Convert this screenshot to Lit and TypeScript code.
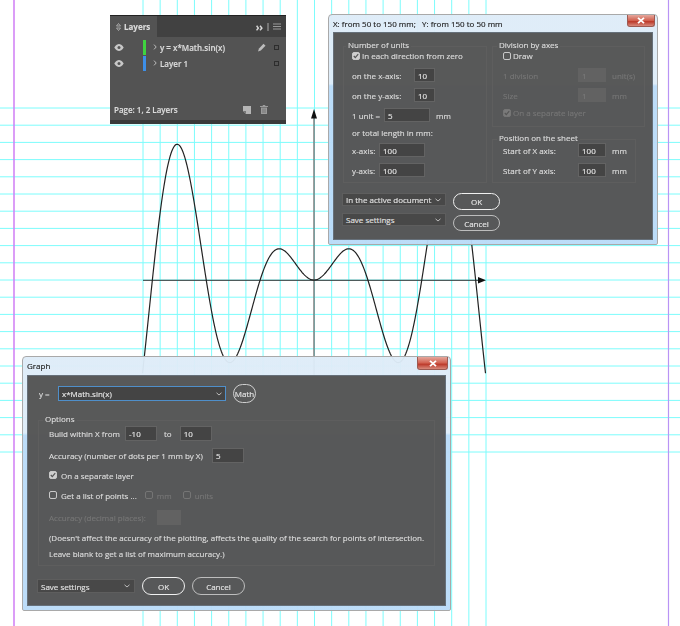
import { LitElement, html, css, svg } from 'lit'
import { customElement } from 'lit/decorators.js'

const UNIT = 17.15
const CX = 314
const CY = 280

@customElement('app-root')
export class AppRoot extends LitElement {
  static styles = css`
    :host {
      display: block;
      position: relative;
      width: 680px;
      height: 626px;
      overflow: hidden;
      background: #fff;
      font-family: "Open Sans", "Liberation Sans", sans-serif;
      font-size: 8px;
      color: #dcdcdc;
      -webkit-text-stroke: .15px;
    }

    * {
      box-sizing: border-box;
    }

    .canvas {
      position: absolute;
      inset: 0;
      width: 680px;
      height: 626px;
    }

    /* windows sit on the page like on a desktop */
    .win {
      position: absolute;
      display: flex;
      flex-direction: column;
      padding: 0 4px 4px;
      border: 1px solid #a9a9a9;
      border-radius: 4px 4px 2px 2px;
      background: linear-gradient(180deg, rgba(222, 236, 248, .96) 0, rgba(222, 236, 248, .96) 30%, rgba(186, 219, 248, .96) 31%, rgba(186, 219, 248, .96) 100%);
      filter: blur(.25px);
    }

    .win--units {
      left: 328px;
      top: 14px;
      width: 330px;
      height: 231px;
    }

    .win--graph {
      left: 22px;
      top: 356px;
      width: 429px;
      height: 255px;
    }

    .title {
      display: flex;
      justify-content: space-between;
      align-items: flex-start;
      height: 17px;
      margin-right: -2px;
      color: #222;
    }

    .win--graph .title {
      height: 18px;
    }

    .title span {
      padding-top: 3px;
    }

    .close {
      display: flex;
      justify-content: center;
      align-items: center;
      width: 28px;
      height: 12px;
      border: 1px solid #9c5a52;
      border-top: 0;
      border-radius: 0 0 3px 3px;
      background: linear-gradient(180deg, #e5a79c 0, #d1604f 50%, #bc3a2b 60%, #d88a7c 100%);
    }

    .win--graph .close {
      width: 31px;
      height: 13px;
    }

    .body {
      flex: 1;
      background: rgba(85, 85, 85, .975);
      border: 1px solid #66707a;
    }

    .win--units .body {
      padding: 6px 0 0 9px;
    }

    .win--graph .body {
      padding: 8px 0 0 10px;
    }

    .cols {
      display: flex;
      gap: 5px;
    }

    .stack {
      display: flex;
      flex-direction: column;
      gap: 5px;
    }

    fieldset {
      margin: 0;
      padding: 0 0 0 8px;
      min-width: 0;
      border: 1px solid #5e5e5e;
    }

    legend {
      margin-left: -6px;
      padding: 0 2px 4px;
      line-height: 11px;
    }

    .g-units {
      width: 144px;
      height: 144px;
    }

    .g-div {
      width: 153px;
      height: 88px;
      padding-left: 10px;
    }

    .g-pos {
      width: 144px;
      height: 51px;
      padding-left: 10px;
    }

    .row {
      display: flex;
      align-items: center;
      height: 20px;
      white-space: nowrap;
    }

    .row--check {
      height: 9px;
      margin: -3px 0 5px;
    }

    .row--tight {
      height: 15px;
    }

    .row--first {
      margin-top: -7px;
    }

    .dim {
      color: #767676;
    }

    .l62 { width: 62px; }
    .l32 { width: 32px; }
    .l27 { width: 27px; }
    .l75 { width: 75px; }
    .l108 { width: 108px; }

    .unit {
      margin-left: 6px;
    }

    input {
      display: block;
      height: 14px;
      padding: 0 3px;
      border: 1px solid #636363;
      background: #444;
      color: #e6e6e6;
      font: inherit;
      outline: none;
    }

    input:disabled {
      background: #626262;
      border-color: #626262;
      color: #7a7a7a;
    }

    .w21 { width: 21px; }
    .w28 { width: 28px; }
    .w46 { width: 46px; }
    .w32 { width: 32px; }
    .w24 { width: 24px; }

    .check {
      display: flex;
      justify-content: center;
      align-items: center;
      flex: none;
      width: 8px;
      height: 8px;
      margin-right: 2px;
      border: 1px solid #c9c9c9;
      border-radius: 2px;
    }

    .win--graph .check {
      margin-right: 4px;
    }

    .check--on {
      background: #cfcfcf;
    }

    .dim .check {
      border-color: #757575;
    }

    .dim .check--on {
      background: #7a7a7a;
    }

    .foot {
      display: flex;
      gap: 7px;
      margin: 10px 0 0 -1px;
    }

    .selects {
      display: flex;
      flex-direction: column;
      gap: 7px;
      width: 104px;
    }

    .select {
      display: flex;
      justify-content: space-between;
      align-items: center;
      height: 13px;
      padding: 0 4px 0 3px;
      border: 1px solid #5e5e5e;
      background: #484848;
      color: #e0e0e0;
    }

    .buttons {
      display: flex;
      flex-direction: column;
      gap: 5px;
    }

    button {
      height: 16px;
      padding: 0;
      border: 1px solid #bdbdbd;
      border-radius: 9px;
      background: transparent;
      color: #e4e4e4;
      font: inherit;
    }

    .b47 { width: 47px; }
    .b43 { width: 43px; }
    .b53 { width: 53px; }

    .primary {
      height: 17px;
      border: 1.5px solid #f0f0f0;
    }

    /* graph dialog */
    .y-row {
      display: flex;
      align-items: center;
      height: 19px;
      padding-left: 1px;
    }

    .y-row > span {
      width: 19px;
    }

    .combo {
      display: flex;
      justify-content: space-between;
      align-items: center;
      width: 168px;
      height: 15px;
      padding: 0 3px;
      border: 1px solid #4f8fca;
      background: #444;
      color: #e6e6e6;
    }

    .math {
      width: 23px;
      height: 19px;
      margin-left: 7px;
      border-radius: 10px;
      border: 1.5px solid #cfcfcf;
    }

    .g-options {
      width: 397px;
      height: 153px;
      margin-top: 10px;
      padding-left: 10px;
    }

    .g-options input {
      height: 15px;
    }

    .row--build {
      height: 18px;
      margin: -4px 0 3px;
    }

    .row--dec {
      height: 24px;
    }

    .row--note {
      height: 16px;
    }

    .row--last {
      height: 17px;
    }

    .to {
      margin: 0 8px 0 7px;
    }

    .l76 { width: 76px; }
    .l163 { width: 163px; }

    .opt {
      margin-left: 8px;
    }

    .opt + .opt {
      margin-left: 11px;
    }

    .graph-foot {
      display: flex;
      align-items: center;
      gap: 7px;
      margin: 11px 0 0 -1px;
    }

    .graph-foot .select {
      width: 98px;
      height: 14px;
    }

    .graph-foot button {
      height: 18px;
    }

    /* layers panel */
    .layers {
      position: absolute;
      left: 110px;
      top: 15px;
      width: 176px;
      height: 109px;
      display: flex;
      flex-direction: column;
      background: #535353;
      border-top: 1px solid #222;
      color: #dcdcdc;
      filter: blur(.25px);
    }

    .l-head {
      display: flex;
      align-items: stretch;
      justify-content: space-between;
      height: 21px;
      background: #414141;
    }

    .l-tab {
      display: flex;
      align-items: center;
      gap: 3px;
      width: 47px;
      padding-left: 6px;
      background: #535353;
      font-weight: 700;
    }

    .l-tools {
      display: flex;
      align-items: center;
      gap: 4px;
      padding-right: 5px;
      font-size: 10px;
      font-weight: 700;
    }

    .l-rows {
      flex: 1;
      padding-top: 2px;
    }

    .l-row {
      display: flex;
      align-items: center;
      height: 16px;
    }

    .eye {
      margin: 0 19px 0 4px;
    }

    .bar {
      width: 3px;
      height: 15px;
      margin-right: 7px;
    }

    .bar--green { background: #3fd43f; }
    .bar--blue { background: #3d8fe8; }

    .l-name {
      flex: 1;
      margin-left: 3px;
      font-weight: 600;
    }

    .pen {
      margin-right: 8px;
    }

    .sq {
      width: 5px;
      height: 5px;
      margin-right: 7px;
      border: 1px solid #2d2d2d;
    }

    .l-foot {
      display: flex;
      align-items: center;
      gap: 9px;
      height: 17px;
      padding: 0 18px 4px 4px;
    }

    .l-foot span {
      flex: 1;
      font-weight: 600;
    }

    .l-strip {
      height: 4px;
      background: #3a3a3a;
    }
  `

  private curve () {
    const pts: string[] = []
    for (let x = -10; x <= 10.001; x += 0.05) {
      pts.push(`${(CX + x * UNIT).toFixed(2)},${(CY - x * Math.sin(x) * UNIT).toFixed(2)}`)
    }
    return pts.join(' ')
  }

  private guides () {
    const lines = []
    for (let i = 0; i <= 20; i++) {
      const x = 143 + i * UNIT
      const y = 108 + i * 17.2
      lines.push(svg`<line x1=${x} y1="0" x2=${x} y2="626" stroke="#7dfcfc"/>`)
      lines.push(svg`<line x1="0" y1=${y} x2="680" y2=${y} stroke="#7dfcfc"/>`)
    }
    return lines
  }

  private check (on = false) {
    return html`<span class="check ${on ? 'check--on' : ''}">${on
      ? svg`<svg width="6" height="6" viewBox="0 0 6 6"><path d="M.8 3l1.500 1.600L5.200 1.200" fill="none" stroke="#555" stroke-width="1.200"/></svg>`
      : ''}</span>`
  }

  private chevron () {
    return html`<svg width="6" height="4" viewBox="0 0 6 4"><path d="M.5.8L3 3l2.500-2.200" fill="none" stroke="#bbb"/></svg>`
  }

  private closeBtn () {
    return html`<div class="close"><svg width="8" height="7" viewBox="0 0 8 7"><path d="M1 .8l6 5.400M7 .8L1 6.200" stroke="#fff" stroke-width="1.800"/></svg></div>`
  }

  private eye () {
    return html`<svg class="eye" width="10" height="7" viewBox="0 0 10 7"><path d="M.3 3.500C2 .8 3.600 0 5 0s3 .8 4.700 3.500C8 6.200 6.400 7 5 7S2 6.200.3 3.500z" fill="#c8c8c8"/><circle cx="5" cy="3.500" r="1.500" fill="#555"/></svg>`
  }

  private arrow () {
    return html`<svg width="4" height="6" viewBox="0 0 4 6"><path d="M1 .6L3.200 3 1 5.400" fill="none" stroke="#bbb"/></svg>`
  }

  private renderLayers () {
    return html`
      <div class="layers">
        <div class="l-head">
          <div class="l-tab">
            <svg width="5" height="8" viewBox="0 0 5 8"><path d="M2.500.5L4.500 3H.5zM2.500 7.500L.5 5h4z" fill="none" stroke="#bbb" stroke-width=".8"/></svg>
            Layers
          </div>
          <div class="l-tools">
            <span>&rsaquo;&rsaquo;</span>
            <svg width="14" height="8" viewBox="0 0 14 8"><path d="M1 0v8" stroke="#aaa"/><path d="M6 1h8M6 3.500h8M6 6h8" stroke="#999" stroke-width="1.200"/></svg>
          </div>
        </div>
        <div class="l-rows">
          <div class="l-row">
            ${this.eye()}<i class="bar bar--green"></i>${this.arrow()}
            <span class="l-name">y = x*Math.sin(x)</span>
            <svg class="pen" width="9" height="9" viewBox="0 0 9 9"><path d="M1 8.500l1-3L6.500.8 8.500 2.800 3.800 7.500z" fill="#bdbdbd"/></svg>
            <i class="sq"></i>
          </div>
          <div class="l-row">
            ${this.eye()}<i class="bar bar--blue"></i>${this.arrow()}
            <span class="l-name">Layer 1</span>
            <i class="sq"></i>
          </div>
        </div>
        <div class="l-foot">
          <span>Page: 1, 2 Layers</span>
          <svg width="8" height="8" viewBox="0 0 8 8"><path d="M0 0h8v8H3L0 5z" fill="#b5b5b5"/><path d="M0 5h3v3z" fill="#777"/></svg>
          <svg width="8" height="9" viewBox="0 0 8 9"><path d="M0 1.500h8M3 1.500V.5h2v1" stroke="#9b9b9b" fill="none"/><path d="M1 2.500h6V9H1z" fill="#9b9b9b"/><path d="M3 3.500V8M5 3.500V8" stroke="#666" stroke-width=".7"/></svg>
        </div>
        <div class="l-strip"></div>
      </div>
    `
  }

  private renderUnits () {
    return html`
      <div class="win win--units">
        <div class="title"><span>X: from 50 to 150 mm;&nbsp;&nbsp; Y: from 150 to 50 mm</span>${this.closeBtn()}</div>
        <div class="body">
          <div class="cols">
            <fieldset class="g-units">
              <legend>Number of units</legend>
              <div class="row row--check">${this.check(true)}In each direction from zero</div>
              <div class="row"><span class="l62">on the x-axis:</span><input class="w21" value="10"></div>
              <div class="row"><span class="l62">on the y-axis:</span><input class="w21" value="10"></div>
              <div class="row"><span class="l32">1 unit =</span><input class="w46" value="5"><span class="unit">mm</span></div>
              <div class="row row--tight">or total length in mm:</div>
              <div class="row"><span class="l27">x-axis:</span><input class="w46" value="100"></div>
              <div class="row"><span class="l27">y-axis:</span><input class="w46" value="100"></div>
            </fieldset>
            <div class="stack">
              <fieldset class="g-div">
                <legend>Division by axes</legend>
                <div class="row row--check">${this.check()}Draw</div>
                <div class="row dim"><span class="l75">1 division</span><input class="w28" value="1" disabled><span class="unit">unit(s)</span></div>
                <div class="row dim"><span class="l75">Size</span><input class="w28" value="1" disabled><span class="unit">mm</span></div>
                <div class="row row--tight dim">${this.check(true)}On a separate layer</div>
              </fieldset>
              <fieldset class="g-pos">
                <legend>Position on the sheet</legend>
                <div class="row row--first"><span class="l75">Start of X axis:</span><input class="w28" value="100"><span class="unit">mm</span></div>
                <div class="row"><span class="l75">Start of Y axis:</span><input class="w28" value="100"><span class="unit">mm</span></div>
              </fieldset>
            </div>
          </div>
          <div class="foot">
            <div class="selects">
              <div class="select">In the active document${this.chevron()}</div>
              <div class="select">Save settings${this.chevron()}</div>
            </div>
            <div class="buttons">
              <button class="primary b47">OK</button>
              <button class="b47">Cancel</button>
            </div>
          </div>
        </div>
      </div>
    `
  }

  private renderGraph () {
    return html`
      <div class="win win--graph">
        <div class="title"><span>Graph</span>${this.closeBtn()}</div>
        <div class="body">
          <div class="y-row">
            <span>y =</span>
            <div class="combo">x*Math.sin(x)${this.chevron()}</div>
            <button class="math">Math</button>
          </div>
          <fieldset class="g-options">
            <legend>Options</legend>
            <div class="row row--build"><span class="l76">Build within X from</span><input class="w32" value="-10"><span class="to">to</span><input class="w32" value="10"></div>
            <div class="row"><span class="l163">Accuracy (number of dots per 1 mm by X)</span><input class="w32" value="5"></div>
            <div class="row">${this.check(true)}On a separate layer</div>
            <div class="row">
              ${this.check()}Get a list of points ...
              <span class="row dim opt">${this.check()}mm</span>
              <span class="row dim opt">${this.check()}units</span>
            </div>
            <div class="row row--dec dim"><span class="l108">Accuracy (decimal places):</span><input class="w24" disabled></div>
            <div class="row row--note">(Doesn't affect the accuracy of the plotting, affects the quality of the search for points of intersection.</div>
            <div class="row row--last">Leave blank to get a list of maximum accuracy.)</div>
          </fieldset>
          <div class="graph-foot">
            <div class="select">Save settings${this.chevron()}</div>
            <button class="primary b43">OK</button>
            <button class="b53">Cancel</button>
          </div>
        </div>
      </div>
    `
  }

  render () {
    return html`
      <svg class="canvas" viewBox="0 0 680 626">
        ${this.guides()}
        <line x1="14" y1="0" x2="14" y2="626" stroke="#cf7cf5" stroke-width="1.500"/>
        <line x1="668.500" y1="0" x2="668.500" y2="626" stroke="#b994f5" stroke-width="1.200"/>
        <line x1="314" y1="112" x2="314" y2="452" stroke="#777" stroke-width="1.400"/>
        <path d="M311 118.500L314 109l3 9.500z" fill="#111"/>
        <line x1="143" y1="280.300" x2="480" y2="280.300" stroke="#333" stroke-width="1"/>
        <path d="M478 277l8 3.300-8 3.300z" fill="#111"/>
        <polyline points=${this.curve()} fill="none" stroke="#222" stroke-width="1.200"/>
      </svg>
      ${this.renderLayers()}
      ${this.renderUnits()}
      ${this.renderGraph()}
    `
  }
}
